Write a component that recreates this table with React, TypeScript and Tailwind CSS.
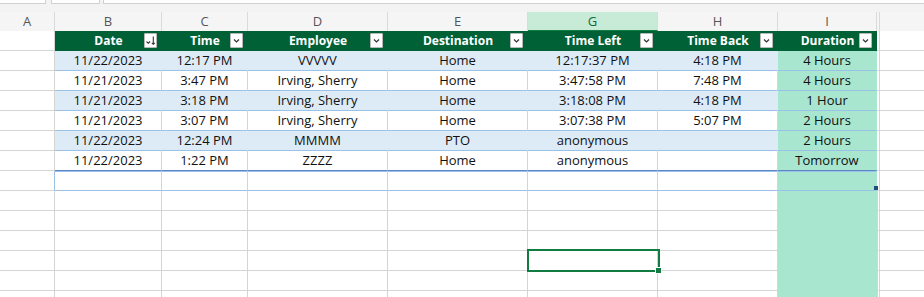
import React from "react";

type Col = { key: string; w: string };

const tableCols = [
  { key: "B", w: "w-[107px]", head: "Date" },
  { key: "C", w: "w-[86px]", head: "Time" },
  { key: "D", w: "w-[140px]", head: "Employee" },
  { key: "E", w: "w-[140px]", head: "Destination" },
  { key: "G", w: "w-[130px]", head: "Time Left" },
  { key: "H", w: "w-[120px]", head: "Time Back" },
  { key: "I", w: "w-[99px]", head: "Duration" },
];

const rows: string[][] = [
  ["11/22/2023", "12:17 PM", "VVVVV", "Home", "12:17:37 PM", "4:18 PM", "4 Hours"],
  ["11/21/2023", "3:47 PM", "Irving, Sherry", "Home", "3:47:58 PM", "7:48 PM", "4 Hours"],
  ["11/21/2023", "3:18 PM", "Irving, Sherry", "Home", "3:18:08 PM", "4:18 PM", "1 Hour"],
  ["11/21/2023", "3:07 PM", "Irving, Sherry", "Home", "3:07:38 PM", "5:07 PM", "2 Hours"],
  ["11/22/2023", "12:24 PM", "MMMM", "PTO", "anonymous", "", "2 Hours"],
  ["11/22/2023", "1:22 PM", "ZZZZ", "Home", "anonymous", "", "Tomorrow"],
];

function FilterButton({ sort }: { sort?: boolean }) {
  return (
    <div className="absolute right-[5px] top-[2px] w-[13px] h-[15px] bg-white border border-[#b8b8b8] rounded-[1px] flex items-center justify-center">
      {sort ? (
        <svg width="11" height="11" viewBox="0 0 11 11" fill="none" stroke="#333" strokeWidth="1.1">
          <path d="M1.5 6.5 L3.3 8.3 L5.1 6.5" />
          <path d="M8.3 1.5 V9.3" />
          <path d="M6.8 7.8 L8.3 9.3 L9.8 7.8" />
        </svg>
      ) : (
        <svg width="9" height="9" viewBox="0 0 9 9" fill="none" stroke="#333" strokeWidth="1.2">
          <path d="M2 3.5 L4.5 6 L7 3.5" />
        </svg>
      )}
    </div>
  );
}

export default function App() {
  return (
    <div className="relative w-[924px] h-[297px] overflow-hidden bg-white font-['Open_Sans',sans-serif] text-[13px] text-[#111]">
      {/* top strip */}
      <div className="h-[12px] bg-[#f3f3f3] flex items-start">
        <div className="w-[46px] h-[4px] bg-white border-r border-b border-[#d0d0d0]" />
        <div className="ml-[5px] w-[49px] h-[4px] bg-white border-x border-b border-[#d0d0d0]" />
        <div className="ml-[3px] flex-1 h-[4px] bg-white border-l border-b border-[#d0d0d0]" />
      </div>

      {/* column letters */}
      <div className="h-[19px] flex bg-[#f5f5f5] text-[#555] text-[13px] leading-[18px]">
        <div className="w-[55px] border-r border-[#dadada] text-center">A</div>
        {tableCols.map((c) => (
          <div
            key={c.key}
            className={`${c.w} text-center border-r border-[#dadada] ${
              c.key === "G" ? "bg-[#c8ebd8] border-b border-b-[#107c41] text-[#0e6a3a]" : ""
            }`}
          >
            {c.key}
          </div>
        ))}
        <div className="w-[3px] border-r border-[#dadada]" />
        <div className="flex-1" />
      </div>

      {/* table header */}
      <div className="h-[20px] flex">
        <div className="w-[55px] bg-white border-r border-b border-[#d4d4d4]" />
        {tableCols.map((c, i) => (
          <div
            key={c.key}
            className={`${c.w} relative bg-[#006137] text-white font-bold text-[12px] leading-[19px] text-center`}
          >
            {c.head}
            <FilterButton sort={i === 0} />
          </div>
        ))}
        <div className="w-[3px] border-r border-b border-[#d4d4d4]" />
        <div className="flex-1 border-b border-[#d4d4d4]" />
      </div>

      {/* data rows */}
      {rows.map((r, ri) => {
        const blue = ri % 2 === 0;
        const last = ri === rows.length - 1;
        const bb = last ? "border-b-[#5b87c5]" : "border-b-[#9bc2e6]";
        return (
          <div key={ri} className="h-[20px] flex leading-[19px]">
            <div className="w-[55px] bg-white border-r border-b border-[#d4d4d4]" />
            {tableCols.map((c, ci) => {
              const isDur = c.key === "I";
              const bg = isDur ? "bg-[#a9e6cf]" : blue ? "bg-[#ddebf7]" : "bg-white";
              const br = isDur
                ? "border-r border-r-[#a9e6cf]"
                : blue
                ? "border-r border-r-[#ddebf7]"
                : "border-r border-r-[#d4d4d4]";
              return (
                <div key={c.key} className={`${c.w} ${bg} ${br} border-b ${bb} text-center whitespace-nowrap`}>
                  {r[ci]}
                </div>
              );
            })}
            <div className="w-[3px] border-r border-b border-[#d4d4d4]" />
            <div className="flex-1 border-b border-[#d4d4d4]" />
          </div>
        );
      })}

      {/* empty table row */}
      <div className="h-[20px] flex">
        <div className="w-[55px] bg-white border-r border-r-[#9bc2e6] border-b border-b-[#d4d4d4]" />
        {tableCols.map((c) => {
          const isDur = c.key === "I";
          return (
            <div
              key={c.key}
              className={`${c.w} border-t border-t-[#9bc2e6] border-b border-b-[#9bc2e6] ${
                isDur ? "bg-[#a9e6cf] border-r border-r-[#a9e6cf]" : "bg-white border-r border-r-[#d4d4d4]"
              }`}
            />
          );
        })}
        <div className="w-[3px] border-r border-b border-[#d4d4d4]" />
        <div className="flex-1 border-b border-[#d4d4d4]" />
      </div>

      {/* plain rows */}
      {[0, 1, 2, 3, 4, 5].map((ri) => (
        <div key={ri} className="h-[20px] flex">
          <div className="w-[55px] bg-white border-r border-b border-[#d4d4d4]" />
          {tableCols.map((c) =>
            c.key === "I" ? (
              <div key={c.key} className={`${c.w} bg-[#a9e6cf]`} />
            ) : (
              <div key={c.key} className={`${c.w} border-r border-b border-[#d4d4d4]`} />
            )
          )}
          <div className="w-[3px] border-l border-r border-b border-[#d4d4d4]" />
          <div className="flex-1 border-b border-[#d4d4d4]" />
        </div>
      ))}

      {/* table resize handle */}
      <div className="absolute left-[874px] top-[186px] w-[4px] h-[4px] bg-[#1f4e79]" />

      {/* active cell selection */}
      <div className="absolute left-[527px] top-[249px] w-[133px] h-[23px] border-2 border-[#107c41]" />
      <div className="absolute left-[655px] top-[267px] w-[7px] h-[7px] bg-[#107c41] border border-white" />
    </div>
  );
}
